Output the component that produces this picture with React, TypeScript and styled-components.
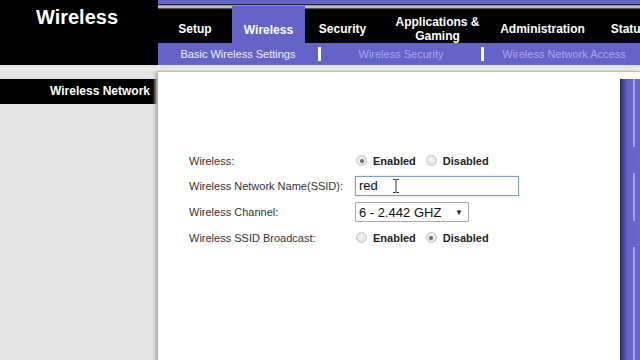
import React from "react";
import styled, { createGlobalStyle } from "styled-components";

const GlobalStyle = createGlobalStyle`
  html, body {
    margin: 0;
    padding: 0;
    width: 640px;
    height: 360px;
    overflow: hidden;
    background: #ffffff;
    font-family: "Liberation Sans", Arial, sans-serif;
  }
  * {
    box-sizing: border-box;
  }
`;

const tabs = [
  { label: "Setup", width: 74 },
  { label: "Wireless", width: 73, active: true },
  { label: "Security", width: 75 },
  { label: "Applications &\nGaming", width: 115 },
  { label: "Administration", width: 95 },
  { label: "Status", width: 78 },
];

const subItems = [
  { label: "Basic Wireless Settings", active: true },
  { label: "Wireless Security" },
  { label: "Wireless Network Access" },
];

const Radio = ({ checked }: { checked?: boolean }) => (
  <RadioDot $checked={checked} />
);

export default function App() {
  return (
    <Page>
      <GlobalStyle />
      <Header>
        <Brand>Wireless</Brand>
        <NavArea>
          <TopStrip />
          <TabBar>
            {tabs.map((t) => (
              <Tab key={t.label} $width={t.width} $active={t.active}>
                {t.label}
              </Tab>
            ))}
          </TabBar>
          <SubNav>
            {subItems.map((s, idx) => (
              <React.Fragment key={s.label}>
                {idx > 0 && <SubDivider />}
                <SubItem $active={s.active}>{s.label}</SubItem>
              </React.Fragment>
            ))}
          </SubNav>
        </NavArea>
      </Header>
      <Main>
        <Sidebar>
          <SideTitle>Wireless Network</SideTitle>
        </Sidebar>
        <Content>
          <Form>
            <Label>Wireless:</Label>
            <Choices>
              <Radio checked />
              <ChoiceText>Enabled</ChoiceText>
              <Radio />
              <ChoiceText>Disabled</ChoiceText>
            </Choices>

            <Label>Wireless Network Name(SSID):</Label>
            <Field>
              <TextBox>red</TextBox>
              <Caret width="8" height="16" viewBox="0 0 8 16">
                <path
                  d="M1 1.5h2.5L4 2l.5-.5H7M4 2v12M1 14.5h2.5L4 14l.5.5H7"
                  fill="none"
                  stroke="#333"
                  strokeWidth="1"
                />
              </Caret>
            </Field>

            <Label>Wireless Channel:</Label>
            <Field>
              <SelectBox>
                <span>6 - 2.442 GHZ</span>
                <Arrow>▼</Arrow>
              </SelectBox>
            </Field>

            <Label>Wireless SSID Broadcast:</Label>
            <Choices>
              <Radio />
              <ChoiceText>Enabled</ChoiceText>
              <Radio checked />
              <ChoiceText>Disabled</ChoiceText>
            </Choices>
          </Form>
          <EdgeBar>
            <EdgeLine $height={68} />
            <EdgeLine $height={48} $gap={26} />
            <EdgeLine $height={200} $gap={26} />
          </EdgeBar>
        </Content>
      </Main>
    </Page>
  );
}

const Page = styled.div`
  width: 640px;
  height: 360px;
  display: flex;
  flex-direction: column;
  background: #e4e4e4;
  overflow: hidden;
`;

const Header = styled.div`
  display: grid;
  grid-template-columns: 158px 1fr;
  height: 66px;
  background: #000;
`;

const Brand = styled.div`
  color: #fff;
  font-size: 20px;
  font-weight: bold;
  text-align: center;
  padding: 5px 4px 0 0;
  line-height: 24px;
`;

const NavArea = styled.div`
  display: flex;
  flex-direction: column;
  overflow: hidden;
`;

const TopStrip = styled.div`
  height: 5px;
  background: #6464c8;
  border-bottom: 1px solid #1e1e3a;
`;

const TabBar = styled.div`
  display: flex;
  height: 38px;
  background: linear-gradient(
    to bottom,
    #7c7c7c 0,
    #dadada 2px,
    #9a9a9a 3px,
    #111 4px,
    #000 6px
  );
`;

const Tab = styled.div<{ $width: number; $active?: boolean }>`
  flex: 0 0 ${(p) => p.$width}px;
  display: flex;
  align-items: center;
  justify-content: center;
  padding-top: 10px;
  margin-top: ${(p) => (p.$active ? "1px" : "0")};
  background: ${(p) => (p.$active ? "#6464c8" : "transparent")};
  color: #fff;
  font-size: 12px;
  font-weight: bold;
  line-height: 14px;
  text-align: center;
  white-space: pre-line;
`;

const SubNav = styled.div`
  display: flex;
  align-items: center;
  height: 22px;
  background: #6464c8;
  overflow: hidden;
`;

const SubItem = styled.div<{ $active?: boolean }>`
  flex: 0 0 160px;
  text-align: center;
  font-size: 11px;
  color: ${(p) => (p.$active ? "#eeeeff" : "#a4a4ec")};
  white-space: nowrap;
`;

const SubDivider = styled.div`
  flex: 0 0 3px;
  height: 14px;
  background: #fff;
`;

const Main = styled.div`
  flex: 1;
  display: grid;
  grid-template-columns: 158px 1fr;
  padding-top: 7px;
  background: linear-gradient(to bottom, #e2e2e2 0, #ececec 4px, #e4e4e4 7px);
`;

const Sidebar = styled.div`
  padding-top: 7px;
  background: #e4e4e4;
`;

const SideTitle = styled.div`
  height: 25px;
  background: #000;
  color: #fff;
  font-size: 12px;
  font-weight: bold;
  text-align: right;
  padding-right: 8px;
  line-height: 25px;
`;

const Content = styled.div`
  display: grid;
  grid-template-columns: 1fr 20px;
  background: #fff;
  box-shadow: -3px 0 3px #b4b4b4, 0 -1px 1px #c8c8c8;
`;

const Form = styled.div`
  display: grid;
  grid-template-columns: 166px auto;
  grid-auto-rows: 25.67px;
  align-content: start;
  align-items: center;
  padding: 76px 0 0 31px;
`;

const Label = styled.div`
  font-size: 11px;
  color: #333;
  white-space: nowrap;
`;

const Choices = styled.div`
  display: flex;
  align-items: center;
  padding-left: 1px;
`;

const RadioDot = styled.span<{ $checked?: boolean }>`
  width: 11px;
  height: 11px;
  border-radius: 50%;
  border: 1px solid #c4c4c4;
  background: radial-gradient(circle at 50% 40%, #f4f4f4 0, #dcdcdc 100%);
  display: flex;
  align-items: center;
  justify-content: center;
  margin-right: 6px;
  &::after {
    content: "";
    width: 4px;
    height: 4px;
    border-radius: 50%;
    background: ${(p) => (p.$checked ? "#6a6a6a" : "transparent")};
  }
`;

const ChoiceText = styled.span`
  font-size: 11px;
  font-weight: bold;
  color: #222;
  margin-right: 10px;
`;

const Field = styled.div`
  position: relative;
  display: flex;
  align-items: center;
`;

const TextBox = styled.div`
  width: 164px;
  height: 20px;
  border: 1px solid #7e9ec4;
  box-shadow: 0 0 2px #c4d4ea;
  font-size: 13px;
  line-height: 18px;
  padding-left: 3px;
  color: #111;
  background: #fff;
`;

const Caret = styled.svg`
  position: absolute;
  left: 37px;
  top: 2px;
`;

const SelectBox = styled.div`
  width: 114px;
  height: 20px;
  border: 1px solid #a8a8a8;
  display: flex;
  align-items: center;
  justify-content: space-between;
  padding: 0 5px 0 3px;
  font-size: 13px;
  color: #111;
  background: #fff;
`;

const Arrow = styled.span`
  font-size: 8px;
  color: #222;
`;

const EdgeBar = styled.div`
  margin-top: 7px;
  display: flex;
  flex-direction: column;
  background: linear-gradient(
    to right,
    #26264c 0,
    #3a3a88 2px,
    #5252b4 5px,
    #6464c8 8px,
    #6868cc 100%
  );
`;

const EdgeLine = styled.div<{ $height: number; $gap?: number }>`
  height: ${(p) => p.$height}px;
  margin-top: ${(p) => p.$gap || 0}px;
  margin-left: 13px;
  width: 2px;
  background: #a2a2ee;
`;
